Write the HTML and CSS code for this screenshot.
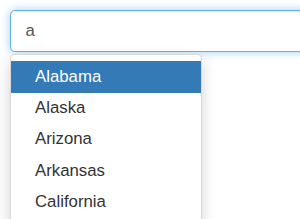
FILE: index.html
```html
<!DOCTYPE html>
<html lang="en">
<head>
    <meta charset="UTF-8">
    <title>Typeahead</title>
    <link rel="stylesheet" href="styles.css">
</head>
<body>
    <div class="page">
        <div class="typeahead">
            <input type="text" class="form-control focused" value="a">
            <ul class="dropdown-menu">
                <li class="active"><a href="#">Alabama</a></li>
                <li><a href="#">Alaska</a></li>
                <li><a href="#">Arizona</a></li>
                <li><a href="#">Arkansas</a></li>
                <li><a href="#">California</a></li>
            </ul>
        </div>
    </div>
</body>
</html>
```

FILE: styles.css
```css
* {
    margin: 0;
    padding: 0;
    box-sizing: border-box;
}

html, body {
    width: 300px;
    height: 219px;
    overflow: hidden;
    background-color: #fff;
    font-family: "Liberation Sans", Arial, sans-serif;
    font-size: 16.8px;
    color: #333;
}

.page {
    padding: 10px;
}

.typeahead {
    position: relative;
    width: 420px;
}

.form-control {
    display: block;
    width: 100%;
    height: 42px;
    padding: 7px 14.4px;
    font-family: inherit;
    font-size: 16.8px;
    line-height: 24px;
    color: #555;
    background-color: #fff;
    border: 1px solid #ccc;
    border-radius: 4.8px;
    outline: none;
}

.form-control.focused {
    border-color: #66afe9;
    box-shadow: inset 0 1px 1px rgba(0, 0, 0, 0.075), 0 0 9.6px rgba(102, 175, 233, 0.6);
}

.dropdown-menu {
    position: absolute;
    top: 100%;
    left: 0;
    margin-top: 2.4px;
    min-width: 192px;
    padding: 6px 0;
    list-style: none;
    background-color: #fff;
    border: 1px solid rgba(0, 0, 0, 0.15);
    border-radius: 4.8px;
    box-shadow: 0 7.2px 14.4px rgba(0, 0, 0, 0.175);
}

.dropdown-menu li a {
    display: block;
    padding: 3.6px 24px;
    line-height: 24px;
    color: #333;
    text-decoration: none;
    white-space: nowrap;
}

.dropdown-menu li.active a {
    background-color: #337ab7;
    color: #fff;
}
```
